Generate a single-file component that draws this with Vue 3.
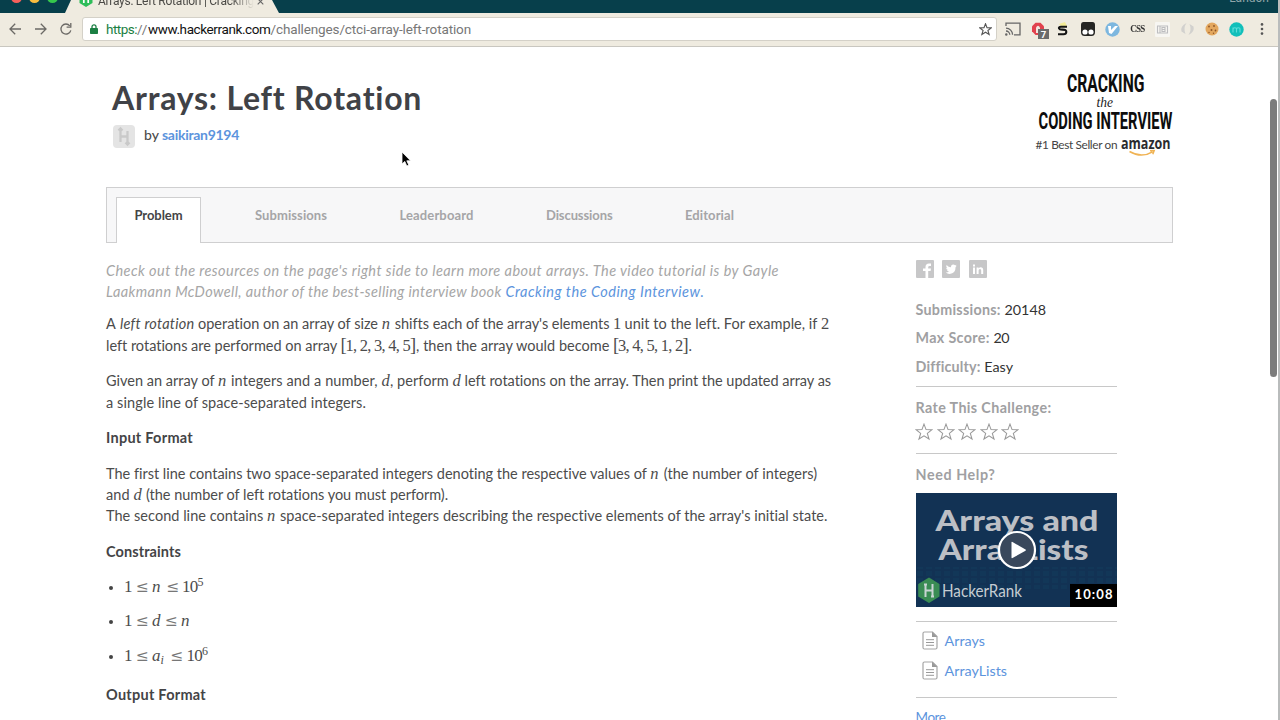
<template>
  <div class="window">
    <div class="tabstrip">
      <span class="light red"></span>
      <span class="light yellow"></span>
      <span class="light green"></span>
      <div class="browser-tab">
        <svg class="tab-shape" width="214" height="13" viewBox="0 0 214 13"><path d="M0 13 L6 0 H207 L214 13Z" fill="#efebe0" /></svg>
        <svg class="favicon" width="14" height="16" viewBox="0 0 14 16">
          <path d="M7 0 L13.5 3.7 V12 L7 16 L.5 12 V3.7Z" fill="#2ebd59" />
          <path d="M4.8 4V12M9.2 4V12M4.8 8H9.2" stroke="#fff" stroke-width="1.7" fill="none" />
        </svg>
        <span v-fit="156" class="tab-title">Arrays: Left Rotation | Cracking</span>
        <svg class="tab-close" width="7" height="7" viewBox="0 0 7 7"><path d="M.7 .7 6.3 6.3M6.3 .7 .7 6.3" stroke="#666" stroke-width="1.1" /></svg>
      </div>
      <span class="profile">Landon</span>
    </div>

    <div class="toolbar">
      <svg class="nav" width="74" height="16" viewBox="0 0 74 16" fill="none" stroke="#6b6965" stroke-width="1.3">
        <path d="M12 8H1.2M6.2 2.8 1 8l5.2 5.2" />
        <path d="M26 8h10.8M31.8 2.8 37 8l-5.2 5.2" />
        <path d="M60.8 4.8A5 5 0 1 0 61.8 9.3" />
        <path d="M61.8 2v4.2h-4.2" />
      </svg>
      <div class="address">
        <svg class="lock" width="8" height="10" viewBox="0 0 8 10"><rect y="4" width="8" height="6" rx=".8" fill="#1b7f43" /><path d="M2 4.5V2.8a2 2 0 0 1 4 0v1.7" fill="none" stroke="#1b7f43" stroke-width="1.3" /></svg>
        <span class="url"><span v-fit="31" class="scheme">https:</span><span v-fit="11">//</span><span v-fit="122.5" class="host">www.hackerrank.com</span><span v-fit="200.5">/challenges/ctci-array-left-rotation</span></span>
        <svg class="bookmark" width="13" height="13" viewBox="0 0 20 20"><path :d="star" fill="none" stroke="#555" stroke-width="1.7" /></svg>
      </div>
      <div class="extensions">
        <svg width="16" height="14" viewBox="0 0 16 14" fill="none" stroke="#666" stroke-width="1.3"><path d="M1 4V1.2h14v11.6H9" /><path d="M1 6.2a6.6 6.6 0 0 1 6.6 6.6M1 9a3.8 3.8 0 0 1 3.8 3.8" /><circle cx="1.3" cy="12.5" r=".6" /></svg>
        <svg class="blocker" width="18" height="17" viewBox="0 0 18 17"><path d="M4.5 .8h5L13 4.3v5L9.5 13h-5L1 9.3v-5z" fill="#e1424e" /><path d="M5 11V5.500q2-3.500 4 0V11z" fill="#f1e6df" /><rect x="7" y="7" width="11" height="10" fill="#6b6b6b" /><text x="12.5" y="15.6" class="badge">7</text></svg>
        <svg width="12" height="14" viewBox="0 0 12 14"><path d="M2 2 8 0l2 4-4 2z" fill="#f3ec98" /><path d="M10 4.8H4Q1.5 4.9 2 6.300t3.500 1.300Q9.500 7.600 9.300 10T6 12.200H1" fill="none" stroke="#151515" stroke-width="2.1" /></svg>
        <svg width="14" height="14" viewBox="0 0 14 14"><path d="M2.5 0h9Q14 0 14 3v7q0 4-3.5 4h-7Q0 14 0 10V3Q0 0 2.5 0" fill="#252523" /><circle cx="4" cy="10" r="2.6" fill="#fff" /><circle cx="10" cy="10" r="2.6" fill="#fff" /></svg>
        <svg width="15" height="15" viewBox="0 0 15 15"><circle cx="7.5" cy="7.5" r="7.2" fill="#7db7df" /><path d="M3 4h3v4l4-4h3L6.5 12 4 11z" fill="#fff" /></svg>
        <span class="css-ext">CSS</span>
        <svg width="15" height="15" viewBox="0 0 15 15"><rect width="15" height="15" rx="1" fill="#f7f6f2" /><path d="M2.5 4h10v7h-10zM5 4v7M7 5.5h3v4H7zM7 7.5h3" fill="none" stroke="#bdbdc0" stroke-width="1.1" /></svg>
        <svg width="15" height="14" viewBox="0 0 15 14"><path d="M6.5 1Q0 4 1.5 9.5L5.5 12Q3 6 6.5 1z" fill="#d2d1ce" /><path d="M8.5 13q6.500-3 5-8.500L9.500 2q2.500 6-1 11z" fill="#d2d1ce" /></svg>
        <svg width="14" height="14" viewBox="0 0 14 14"><circle cx="7" cy="7" r="6.5" fill="#e3a75e" /><g fill="#8d5526"><circle cx="4" cy="4.5" r=".9" /><circle cx="9" cy="4" r=".9" /><circle cx="6.5" cy="8" r="1" /><circle cx="10.5" cy="8.5" r=".9" /><circle cx="4" cy="10.5" r=".7" /><circle cx="8.5" cy="11.3" r=".7" /></g></svg>
        <svg width="15" height="15" viewBox="0 0 15 15"><circle cx="7.5" cy="7.5" r="7.2" fill="#12bfba" /><path d="M4 10.500v-5m0 2q0-1.700 1.800-1.700t1.700 1.700v3m0-3q0-1.700 1.800-1.700T11 7.500v3" fill="none" stroke="#5fdedb" stroke-width="1.1" /></svg>
        <svg width="4" height="14" viewBox="0 0 4 14" fill="#555"><circle cx="2" cy="2.4" r="1.3" /><circle cx="2" cy="7" r="1.3" /><circle cx="2" cy="11.6" r="1.3" /></svg>
      </div>
    </div>

    <div class="page">
      <header class="challenge-head">
        <div class="heading">
          <h1><span v-fit="310">Arrays: Left Rotation</span></h1>
          <div class="author">
            <svg width="22" height="23" viewBox="0 0 22 23"><rect width="22" height="23" rx="4" fill="#e4e4e4" /><path d="M7.5 4v13M14.5 6v13M7.5 11.5h7M5.5 5.5l2-2 2 2M12.5 17.5l2 2 2-2" fill="none" stroke="#c9c9c9" stroke-width="2.3" /></svg>
            <span v-fit="18" class="by">{{ 'by ' }}</span>
            <a v-fit="77">saikiran9194</a>
          </div>
        </div>
        <svg class="book-logo" width="140" height="88" viewBox="0 0 140 88">
          <g class="book-title">
            <text x="34" y="22.3" font-size="25.7" textLength="77.5" lengthAdjust="spacingAndGlyphs">CRACKING</text>
            <text x="5.5" y="58.5" font-size="24.6" textLength="134" lengthAdjust="spacingAndGlyphs">CODING INTERVIEW</text>
          </g>
          <text x="63.5" y="37" class="book-the" textLength="16.5" lengthAdjust="spacingAndGlyphs">the</text>
          <text x="2.5" y="79.3" class="book-sub" textLength="82">#1 Best Seller on</text>
          <text x="88" y="79.3" class="amazon" textLength="49.5" lengthAdjust="spacingAndGlyphs">amazon</text>
          <path d="M96.5 81.5q12 7 23 .3M117 80.8l4.200-.3-1.400 3.800" fill="none" stroke="#f0b354" stroke-width="1.5" />
        </svg>
      </header>

      <nav class="tabs">
        <div v-for="(tab, i) in tabs" :key="tab[0]" class="tab" :class="{ active: i === 0 }">
          <span v-fit="tab[1]">{{ tab[0] }}</span>
        </div>
      </nav>

      <div class="columns">
        <main class="statement">
          <div v-for="(block, b) in blocks" :key="b" class="block" :class="block.kind">
            <div v-for="(line, l) in block.lines" :key="l" class="line">
              <span v-for="(seg, s) in line" :key="s" v-fit="seg[1]" :class="seg[2]">{{ seg[0] }}</span>
            </div>
          </div>
          <ul class="constraints">
            <li v-for="(line, c) in constraints" :key="c" class="line">
              <span v-for="(seg, s) in line" :key="s" v-fit="seg[1]" :class="['math', seg[2]]">{{ seg[0] }}</span>
            </li>
          </ul>
          <div class="line title"><span v-fit="100">Output Format</span></div>
        </main>

        <aside class="sidebar">
          <div class="social">
            <svg width="18" height="18" viewBox="0 0 18 18"><rect width="18" height="18" rx="1" fill="#c7c7c8" /><path d="M9.5 18v-7H7V8.500h2.500V7q0-3.500 3.500-3.500h2V6h-1.500q-1.300 0-1.300 1.300v1.200H15l-.4 2.500h-2.400v7z" fill="#fff" /></svg>
            <svg width="18" height="18" viewBox="0 0 18 18"><rect width="18" height="18" rx="1" fill="#c7c7c8" /><path d="M3.8 12.6q2 0 3.200-1-1.600-.2-2.100-1.500h1q-1.700-.7-1.700-2.400l1 .2Q3.600 6.600 4.600 5q1.900 2.200 4.400 2.300Q8.900 4.700 11.300 4.600q1 0 1.700.7l1.400-.5-.9 1.300 1.300-.3-1.200 1.200q0 6.500-6 6.900-2 .1-3.800-1.300" fill="#fff" /></svg>
            <svg width="18" height="18" viewBox="0 0 18 18"><rect width="18" height="18" rx="1" fill="#c7c7c8" /><path d="M4 7.500h2V14H4zM4 4.400h2v2H4zM7.600 7.500h2v.9q.8-1.100 2.100-1.100 2.500 0 2.500 2.700v4h-2v-3.500q0-1.500-1.200-1.500-1.400 0-1.400 1.600V14h-2z" fill="#fff" /></svg>
          </div>
          <dl class="stats">
            <div v-for="s in stats" :key="s[0]"><dt v-fit="s[1]">{{ s[0] }}</dt><dd v-fit="s[3]">{{ s[2] }}</dd></div>
          </dl>
          <section class="rate">
            <h4 v-fit="136">Rate This Challenge:</h4>
            <div class="stars">
              <svg v-for="n in 5" :key="n" width="18" height="18" viewBox="0 0 20 20"><path :d="star" fill="none" stroke="#989898" stroke-width="1.15" /></svg>
            </div>
          </section>
          <section class="help">
            <h4 v-fit="80">Need Help?</h4>
            <svg class="video" width="201" height="114" viewBox="0 0 201 114">
              <defs>
                <pattern id="weave" width="9" height="7" patternUnits="userSpaceOnUse"><rect x="1" y="1" width="6" height="5" fill="#154c67" opacity=".2" /></pattern>
              </defs>
              <rect width="201" height="114" fill="#123254" />
              <rect y="74" width="201" height="22" fill="url(#weave)" />
              <g class="video-title">
                <text x="19.5" y="37.5" textLength="163" lengthAdjust="spacingAndGlyphs">Arrays and</text>
                <text x="22.5" y="66.5" textLength="150" lengthAdjust="spacingAndGlyphs">ArrayLists</text>
              </g>
              <path d="M13 84.5 23.5 91v12.5L13 110 2.2 103.500V91z" fill="#3a8c54" />
              <path d="M9.500 91v13M16.500 91v13M9.500 97.500h7M8 91.500h3M15 103.500h3" stroke="#c9d3d3" stroke-width="2" fill="none" />
              <text x="26" y="104" class="brand" textLength="80" lengthAdjust="spacingAndGlyphs">HackerRank</text>
              <circle cx="101" cy="57" r="18" fill="#39485c" stroke="#fff" stroke-width="2.2" />
              <path d="M95.5 49.5v15q0 1 1 .5l13-7.300q.9-.7 0-1.300L96.500 49q-1-.5-1 .5" fill="#fff" />
              <rect x="154" y="91" width="47" height="23" fill="#000" />
              <text x="158.5" y="106.2" class="duration" textLength="38">10:08</text>
            </svg>
          </section>
          <ul class="topics">
            <li v-for="t in topics" :key="t[0]">
              <svg width="16" height="19" viewBox="0 0 16 19"><path d="M2.5 1H10.5l4.5 4.500V16.500Q15 18 13.500 18h-11Q1 18 1 16.500v-14Q1 1 2.500 1z" fill="#fff" stroke="#a5a5a5" stroke-width="1.2" /><path d="M10 .8V6h5.300z" fill="#999" /><path d="M4 8.700h8M4 11.500h8M4 14.300h8" stroke="#999" stroke-width="1" /></svg>
              <a v-fit="t[1]">{{ t[0] }}</a>
            </li>
          </ul>
          <div class="more"><a v-fit="30">More</a></div>
        </aside>
      </div>
    </div>

    <div class="scroll-thumb"></div>
    <div class="window-edge"></div>
    <svg class="cursor" width="12" height="17" viewBox="0 0 12 17"><path d="M1 1v12l2.800-2.600L5.800 15l2-.9-2-4.300h3.800z" fill="#000" stroke="#fff" stroke-width=".8" /></svg>
  </div>
</template>

<script setup>
// Tracks a run of text out so that it fills the given width
const vFit = {
  mounted(el, { value }) {
    el.style.letterSpacing = '0px'
    const natural = el.getBoundingClientRect().width
    el.style.letterSpacing = (value - natural) / el.textContent.length + 'px'
  },
}

const star = 'M10 1.200l2.300 6.100 6.500.2-5.100 4 1.900 6.300L10 14.200l-5.600 3.600 1.900-6.300-5.100-4 6.500-.2z'

const tabs = [
  ['Problem', 48],
  ['Submissions', 72],
  ['Leaderboard', 74],
  ['Discussions', 66.5],
  ['Editorial', 49],
]

// Each line is a list of [text, width, class]
const blocks = [
  {
    kind: 'intro',
    lines: [
      [["Check out the resources on the page's right side to learn more about arrays. The video tutorial is by Gayle", 673]],
      [['Laakmann McDowell, author of the best-selling interview book ', 399.5], ['Cracking the Coding Interview', 195, 'link'], ['.', 4, 'link']],
    ],
  },
  {
    kind: 'para',
    lines: [
      [
        ['A ', 14], ['left rotation ', 77.5, 'em'], ['operation on an array of size ', 184], ['n ', 13, 'math var'],
        ["shifts each of the array's elements ", 218], ['1 ', 11.5, 'math'], ['unit to the left. For example, if ', 196], ['2', 8, 'math'],
      ],
      [
        ['left rotations are performed on array ', 234.5], ['[', 5, 'math bracket'], ['1, 2, 3, 4, 5', 64.5, 'math'], [']', 6, 'math bracket'],
        [', then the array would become ', 197], ['[', 5, 'math bracket'], ['3, 4, 5, 1, 2', 64.5, 'math'], [']', 6, 'math bracket'], ['.', 4],
      ],
    ],
  },
  {
    kind: 'para',
    lines: [
      [
        ['Given an array of ', 112], ['n ', 13, 'math var'], ['integers and a number, ', 150.5], ['d', 8.5, 'math var'],
        [', perform ', 62.5], ['d ', 12, 'math var'], ['left rotations on the array. Then print the updated array as', 366.5],
      ],
      [['a single line of space-separated integers.', 260]],
    ],
  },
  { kind: 'title', lines: [[['Input Format', 87]]] },
  {
    kind: 'para',
    lines: [
      [['The first line contains two space-separated integers denoting the respective values of ', 544.5], ['n ', 13.5, 'math var'], ['(the number of integers)', 153.5]],
      [['and ', 27.5], ['d ', 12.5, 'math var'], ['(the number of left rotations you must perform).', 302]],
      [['The second line contains ', 161], ['n ', 13, 'math var'], ["space-separated integers describing the respective elements of the array's initial state.", 548]],
    ],
  },
  { kind: 'title', lines: [[['Constraints', 75]]] },
]

const constraints = [
  [['1', 12], ['≤', 16, 'rel'], ['n', 14.5, 'var'], ['≤', 15.5, 'rel'], ['10', 15.5], ['5', 6, 'sup']],
  [['1', 12], ['≤', 16, 'rel'], ['d', 13, 'var'], ['≤', 16, 'rel'], ['n', 9, 'var']],
  [['1', 12], ['≤', 16, 'rel'], ['a', 8.5, 'var'], ['i', 10, 'var sub'], ['≤', 16, 'rel'], ['10', 15.5], ['6', 6, 'sup']],
]

const stats = [
  ['Submissions: ', 89, '20148', 41.5],
  ['Max Score: ', 78, '20', 15.5],
  ['Difficulty: ', 68, 'Easy', 29],
]

const topics = [
  ['Arrays', 40.5],
  ['ArrayLists', 62.5],
]
</script>

<style>
body { overflow: hidden; background: #fff; }
</style>

<style scoped>
* { box-sizing: border-box; }
.window {
  position: relative;
  width: 1280px;
  height: 720px;
  overflow: hidden;
  background: #fff;
  font-family: Lato, "Open Sans", sans-serif;
  color: #4c4c4c;
}
.window span, .window a, .window dt, .window dd, .window h4 { white-space: pre; }
a, .link { color: #5c94dd; }
svg { display: block; flex: none; }

/* browser chrome */
.tabstrip {
  display: flex;
  height: 13px;
  padding-left: 11px;
  background: #073f4b;
  overflow: hidden;
}
.light { width: 11px; height: 11px; margin: -8px 7px 0 0; border-radius: 50%; }
.red { background: #f6605b; }
.yellow { background: #f9bd3f; }
.green { background: #36c84c; }
.browser-tab { position: relative; display: flex; width: 214px; }
.tab-shape { position: absolute; left: 0; top: 0; }
.favicon { position: relative; margin: -9px 5px 0 14px; }
.tab-title {
  position: relative;
  height: 16px;
  margin-top: -7px;
  font: 12px/16px Roboto, sans-serif;
  color: #4b4a46;
  -webkit-mask-image: linear-gradient(90deg, #000 85%, transparent);
  mask-image: linear-gradient(90deg, #000 85%, transparent);
}
.tab-close { position: relative; margin: -2px 0 0 3px; }
.profile { margin: -10px 11px 0 auto; font: 12px/16px Roboto, sans-serif; color: #8fa6aa; }
.toolbar {
  display: flex;
  align-items: center;
  height: 34px;
  padding: 0 4px 1px 9px;
  background: #efebe0;
  border-bottom: 1px solid #c9c7c0;
}
.nav { margin-right: -1px; }
.address {
  display: flex;
  align-items: center;
  width: 915px;
  height: 24px;
  padding: 0 4px 0 7px;
  background: #fff;
  border: 1px solid #d4d1c8;
  border-radius: 3px;
}
.lock { margin-right: 8px; }
.url { display: flex; font: 13.5px/18px Roboto, sans-serif; color: #777; }
.scheme { color: #1b7f43; }
.host { color: #111; }
.bookmark { margin-left: auto; }
.extensions { display: grid; grid-template-columns: repeat(11, 24.9px); align-items: center; justify-items: center; padding-left: 3.5px; }
.blocker { margin: 3px -3px 0 2px; }
.badge { font: bold 9.5px Roboto, sans-serif; fill: #fff; text-anchor: middle; }
.css-ext { font: bold 9px "Liberation Serif", serif; letter-spacing: -.8px; color: #333; transform: scaleY(1.15); }

/* challenge page */
.page { padding-left: 106px; }
.challenge-head { display: flex; justify-content: space-between; width: 1067px; height: 140px; }
.heading { padding: 30px 0 0 6px; }
h1 { margin: 0; font-size: 32px; font-weight: 700; line-height: 42px; color: #404247; }
.author { display: flex; align-items: center; height: 22px; margin-top: 5px; font-size: 14px; font-weight: 700; }
.author svg { margin: 3px 9px 0 1px; }
.author span, .author a { margin-top: -1px; }
.by { font-weight: 500; }
.book-logo { margin-top: 23px; }
.book-title { font-family: Roboto, sans-serif; font-weight: 700; fill: #0d0d0d; }
.book-the { font: italic 15px "Liberation Serif", serif; fill: #222; }
.book-sub { font: 11.8px Lato, sans-serif; fill: #444; }
.amazon { font: bold 15.5px "Open Sans", sans-serif; fill: #2b2b2f; }

.tabs {
  display: flex;
  width: 1067px;
  height: 56px;
  padding: 9px 0 0 9px;
  background: #f7f7f8;
  border: 1px solid #cfcfd0;
}
.tab {
  height: 46px;
  margin-right: 35.5px;
  padding: 0 17.5px;
  border: 1px solid transparent;
  border-bottom: 0;
  font-size: 13px;
  font-weight: 700;
  line-height: 35px;
  color: #a5a5a7;
}
.tab.active { background: #fff; border-color: #cfcfd0; color: #444446; }

.columns { display: flex; }
.statement { width: 809.5px; padding-top: 17px; font-size: 14.5px; }
.line { display: flex; align-items: baseline; height: 21.4px; line-height: 21.4px; }
.block { margin-bottom: 14.2px; }
.intro { margin-bottom: 10.4px; font-style: italic; color: #a6a6a6; }
.title { font-size: 14.5px; font-weight: 700; color: #444446; }
.em { font-style: italic; }
.math { font-family: "Liberation Serif", serif; font-size: 16.5px; line-height: 20px; }
.var { font-style: italic; }
.bracket { font-size: 18.5px; }
.constraints { margin: 0 0 17px; padding: 0; list-style: none; }
.constraints .line { height: 21px; margin-bottom: 13.5px; }
.constraints .line::before { content: ""; align-self: center; width: 4px; height: 4px; margin: 1px 11px 0 3px; border-radius: 50%; background: #444; }
.constraints .math { font-size: 17px; }
.constraints .rel { font-family: "DejaVu Serif", serif; font-size: 15.5px; color: #777; }
.constraints .sup { position: relative; top: -6px; font-size: 12px; }
.constraints .sub { position: relative; top: 3px; font-size: 12px; }

.sidebar { width: 201px; padding-top: 17px; font-size: 14.3px; }
.social { display: flex; gap: 8.7px; }
.stats { height: 108.5px; margin: 0; padding-top: 17.5px; border-bottom: 1px solid #c8c8c8; }
.stats div { display: flex; height: 28.5px; line-height: 28.5px; }
dt, h4 { font-size: 14.3px; font-weight: 700; color: #a0a0a2; }
dd { margin: 0; color: #333; }
h4 { display: inline-block; margin: 0; line-height: 20px; }
.rate { height: 67px; padding-top: 11px; border-bottom: 1px solid #c8c8c8; }
.stars { display: flex; gap: 3.5px; margin: 5px 0 0 -.5px; }
.help { height: 168px; padding-top: 11px; border-bottom: 1px solid #c8c8c8; }
.video { margin-top: 8.5px; }
.video-title { font: 900 29px Lato, sans-serif; fill: #bcbfc5; }
.brand { font: 17px Lato, sans-serif; fill: #c5ccd2; }
.duration { font: 700 13px Lato, sans-serif; fill: #fff; }
.topics { height: 76px; margin: 0; padding: 4px 0 0 6px; border-bottom: 1px solid #c8c8c8; list-style: none; }
.topics li { display: flex; align-items: center; gap: 7px; height: 30px; line-height: 18px; }
.more { padding-top: 9px; line-height: 20px; font-size: 13.5px; }

.scroll-thumb { position: absolute; top: 99px; right: 3px; width: 7px; height: 278px; border-radius: 4px; background: #7c7c7c; }
.window-edge { position: absolute; top: 0; right: 0; width: 2px; height: 720px; background: #b9bcbc; }
.cursor { position: absolute; left: 401px; top: 151px; }
</style>
